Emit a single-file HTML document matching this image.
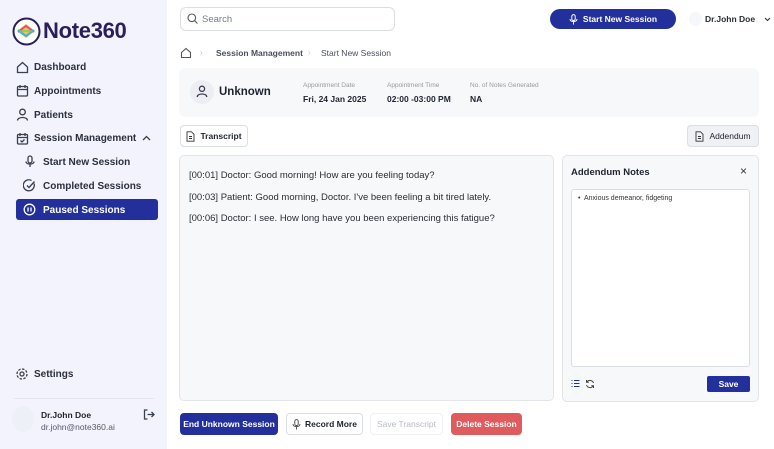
<!DOCTYPE html>
<html><head><meta charset="utf-8"><style>
*{box-sizing:border-box;margin:0;padding:0}
body{width:774px;height:449px;position:relative;background:#fff;font-family:"Liberation Sans",sans-serif;color:#1f2330;overflow:hidden}
.a{position:absolute}
.sb{left:0;top:0;width:167px;height:449px;background:#f2f3fc}
.nav{font-size:10px;font-weight:bold;color:#2b2f3e}
.ic{stroke:#3a3f4e;fill:none;stroke-width:1.3}
.btn{border-radius:4px;font-size:8.5px;font-weight:bold;display:flex;align-items:center;justify-content:center}
</style></head><body>
<div class="a sb"></div>
<svg class="a" style="left:12px;top:17px" width="29" height="29" viewBox="0 0 29 29"><circle cx="14.5" cy="14.5" r="13" fill="#fff" stroke="#2a1f5c" stroke-width="2"/><path d="M5 14 L14 7 L23 14 L14 21Z" fill="#f6c34a"/><path d="M6 15 L14 9 L22 15" stroke="#e94a7a" stroke-width="2" fill="none"/><path d="M6 13 L14 19 L22 13" stroke="#35b6e8" stroke-width="2" fill="none"/><path d="M8 14 H20" stroke="#7bcf5a" stroke-width="1.5"/></svg>
<div class="a" style="left:43px;top:18px;font-size:22px;font-weight:bold;color:#2a1f5c;letter-spacing:-0.3px">Note360</div>

<svg class="a" style="left:16px;top:61px" width="13" height="13"><path class="ic" d="M1.5 6 L6.5 1.5 L11.5 6 V11.5 H1.5Z"/></svg>
<div class="a nav" style="left:34px;top:62px">Dashboard</div>
<svg class="a" style="left:16px;top:84px" width="13" height="13"><rect class="ic" x="1.5" y="2.5" width="10" height="9.5" rx="1"/><path class="ic" d="M1.5 5.5H11.5M4 1V4M9 1V4"/></svg>
<div class="a nav" style="left:34px;top:86px">Appointments</div>
<svg class="a" style="left:16px;top:108px" width="13" height="13"><circle class="ic" cx="6.5" cy="4" r="2.8"/><path class="ic" d="M1.5 12.5C2 8.5 11 8.5 11.5 12.5"/></svg>
<div class="a nav" style="left:34px;top:110px">Patients</div>
<svg class="a" style="left:16px;top:132px" width="13" height="13"><rect class="ic" x="1.5" y="2.5" width="10" height="9.5" rx="1"/><path class="ic" d="M1.5 5.5H11.5M4 1V4M9 1V4M4.5 8.5L6 10L8.5 7.5"/></svg>
<div class="a nav" style="left:34px;top:133px">Session Management</div>
<svg class="a" style="left:142px;top:135px" width="9" height="6"><path class="ic" d="M1 5L4.5 1.5L8 5" stroke-width="1"/></svg>
<svg class="a" style="left:24px;top:155px" width="12" height="13"><rect class="ic" x="4" y="1" width="4" height="7" rx="2"/><path class="ic" d="M2 6.5C2 10 10 10 10 6.5M6 9.5V12"/></svg>
<div class="a nav" style="left:43px;top:157px">Start New Session</div>
<svg class="a" style="left:23px;top:179px" width="13" height="13"><path class="ic" d="M11 4.5A5.5 5.5 0 1 1 8.5 1.5"/><path class="ic" d="M4 6.5L6 8.5L11.5 2.5"/></svg>
<div class="a nav" style="left:43px;top:181px">Completed Sessions</div>
<div class="a" style="left:16px;top:199px;width:142px;height:21px;background:#23309c;border-radius:3px"></div>
<svg class="a" style="left:23px;top:203px" width="13" height="13"><circle cx="6.5" cy="6.5" r="5.3" stroke="#fff" fill="none" stroke-width="1.3"/><path d="M5 4.5V8.5M8 4.5V8.5" stroke="#fff" stroke-width="1.3"/></svg>
<div class="a nav" style="left:43px;top:205px;color:#fff">Paused Sessions</div>

<svg class="a" style="left:15px;top:367px" width="14" height="14"><circle class="ic" cx="7" cy="7" r="2"/><circle class="ic" cx="7" cy="7" r="5" stroke-dasharray="2.5 1.4"/></svg>
<div class="a nav" style="left:34px;top:369px">Settings</div>
<div class="a" style="left:14px;top:398px;width:140px;height:1px;background:#e3e5ef"></div>
<div class="a" style="left:12px;top:406px;width:22px;height:26px;border-radius:50%;background:#eef0f8"></div>
<div class="a" style="left:41px;top:410px;font-size:8.5px;font-weight:bold">Dr.John Doe</div>
<div class="a" style="left:41px;top:422px;font-size:8.5px;color:#555a68">dr.john@note360.ai</div>
<svg class="a" style="left:143px;top:409px" width="12" height="11"><path class="ic" d="M4.5 1H1.5V10H4.5M4.5 5.5H11M8.5 3L11 5.5L8.5 8" stroke-width="1.1"/></svg>

<div class="a" style="left:180px;top:7px;width:215px;height:24px;border:1px solid #dcdee5;border-radius:6px"></div>
<svg class="a" style="left:187px;top:13px" width="11" height="11"><circle cx="4.8" cy="4.8" r="3.8" fill="none" stroke="#555" stroke-width="1.1"/><path d="M7.6 7.6L10.5 10.5" stroke="#555" stroke-width="1.1"/></svg>
<div class="a" style="left:202px;top:14px;font-size:9.5px;color:#777b86">Search</div>
<div class="a btn" style="left:550px;top:9px;width:126px;height:20px;border-radius:11px;background:#23309c;color:#fff;font-size:8.5px"><svg width="9" height="11" style="margin-right:5px"><rect x="2.8" y="0.6" width="3.4" height="6" rx="1.7" stroke="#fff" fill="none"/><path d="M1 5C1 8.5 8 8.5 8 5M4.5 8V10.5" stroke="#fff" fill="none"/></svg>Start New Session</div>
<div class="a" style="left:689px;top:12px;width:13px;height:14px;border-radius:50%;background:#f6f7fa"></div>
<div class="a" style="left:705px;top:14px;font-size:8.5px;font-weight:bold;color:#2a2d36">Dr.John Doe</div>
<svg class="a" style="left:764px;top:17px" width="7" height="5"><path d="M1 1L3.5 3.5L6 1" stroke="#333" fill="none" stroke-width="1.1"/></svg>

<svg class="a" style="left:180px;top:47px" width="12" height="12"><path d="M1.5 5.5L6 1.5L10.5 5.5V10.5H1.5Z" fill="none" stroke="#555" stroke-width="1.1"/></svg>
<div class="a" style="left:200px;top:48px;font-size:8px;color:#bbb">›</div>
<div class="a" style="left:216px;top:48px;font-size:8.5px;font-weight:bold;color:#4a4f5c">Session Management</div>
<div class="a" style="left:308px;top:48px;font-size:8px;color:#ccc">›</div>
<div class="a" style="left:321px;top:48px;font-size:8.5px;color:#4a4f5c">Start New Session</div>

<div class="a" style="left:179px;top:68px;width:580px;height:49px;background:#f7f8fa;border-radius:6px"></div>
<div class="a" style="left:190px;top:80px;width:24px;height:24px;border-radius:50%;background:#eceef3"></div>
<svg class="a" style="left:196px;top:85px" width="12" height="13"><circle class="ic" cx="6" cy="3.8" r="2.6"/><path class="ic" d="M1.2 12C1.6 8 10.4 8 10.8 12"/></svg>
<div class="a" style="left:219px;top:86px;font-size:11.5px;font-weight:bold">Unknown</div>
<div class="a" style="left:303px;top:82px;font-size:6.5px;color:#999">Appointment Date</div>
<div class="a" style="left:303px;top:94px;font-size:8.5px;font-weight:bold">Fri, 24 Jan 2025</div>
<div class="a" style="left:387px;top:82px;font-size:6.5px;color:#999">Appointment Time</div>
<div class="a" style="left:387px;top:94px;font-size:8.5px;font-weight:bold">02:00 -03:00 PM</div>
<div class="a" style="left:470px;top:82px;font-size:6.5px;color:#999">No. of Notes Generated</div>
<div class="a" style="left:470px;top:94px;font-size:8.5px;font-weight:bold">NA</div>

<div class="a btn" style="left:180px;top:125px;width:68px;height:22px;border:1px solid #dcdee5;background:#fff;font-size:8.5px"><svg width="9" height="11" style="margin-right:5px"><path d="M1 0.8H5.5L8 3.3V10.2H1Z M3 5.5H6M3 7.5H6" fill="none" stroke="#333" stroke-width="0.9"/></svg>Transcript</div>
<div class="a btn" style="left:687px;top:125px;width:72px;height:22px;border:1px solid #dcdee5;background:#f0f1f4;font-size:8.5px;font-weight:normal"><svg width="9" height="11" style="margin-right:5px"><path d="M1 0.8H5.5L8 3.3V10.2H1Z M3 5.5H6M3 7.5H6" fill="none" stroke="#333" stroke-width="0.9"/></svg>Addendum</div>

<div class="a" style="left:179px;top:155px;width:375px;height:246px;background:#f7f8fa;border:1px solid #e2e4ea;border-radius:5px"></div>
<div class="a" style="left:189px;top:165px;font-size:9.5px;color:#2a2d36;line-height:21.5px">[00:01] Doctor: Good morning! How are you feeling today?<br>[00:03] Patient: Good morning, Doctor. I've been feeling a bit tired lately.<br>[00:06] Doctor: I see. How long have you been experiencing this fatigue?</div>

<div class="a" style="left:562px;top:155px;width:197px;height:247px;background:#f7f8fa;border:1px solid #e2e4ea;border-radius:5px"></div>
<div class="a" style="left:571px;top:167px;font-size:9.5px;font-weight:bold">Addendum Notes</div>
<div class="a" style="left:740px;top:164px;font-size:12px;color:#333">×</div>
<div class="a" style="left:571px;top:189px;width:179px;height:178px;background:#fff;border:1px solid #dcdee5;border-radius:3px"></div>
<div class="a" style="left:578px;top:195px;font-size:7px;color:#333">•&nbsp; Anxious demeanor, fidgeting</div>
<svg class="a" style="left:571px;top:379px" width="9" height="9"><path d="M3 1.5H8.5M3 4.5H8.5M3 7.5H8.5M0.5 1.5H1.5M0.5 4.5H1.5M0.5 7.5H1.5" stroke="#23309c" stroke-width="1"/></svg>
<svg class="a" style="left:585px;top:379px" width="10" height="10"><path d="M8.5 4A3.8 3.8 0 0 0 1.8 3M1.5 6A3.8 3.8 0 0 0 8.2 7M1.5 1V3.3H3.8M8.5 9V6.7H6.2" fill="none" stroke="#444" stroke-width="1"/></svg>
<div class="a btn" style="left:707px;top:376px;width:43px;height:16px;border-radius:2px;background:#23309c;color:#fff;font-size:8.5px">Save</div>

<div class="a btn" style="left:180px;top:413px;width:98px;height:22px;background:#23309c;color:#fff">End Unknown Session</div>
<div class="a btn" style="left:286px;top:413px;width:77px;height:22px;border:1px solid #dcdee5;background:#fff"><svg width="9" height="11" style="margin-right:4px"><rect x="2.8" y="0.6" width="3.4" height="6" rx="1.7" stroke="#444" fill="none" stroke-width="0.9"/><path d="M1 5C1 8.5 8 8.5 8 5M4.5 8V10.5" stroke="#444" fill="none" stroke-width="0.9"/></svg>Record More</div>
<div class="a btn" style="left:370px;top:413px;width:73px;height:22px;border:1px solid #eef0f3;background:#fff;color:#b8bbc4;font-weight:normal">Save Transcript</div>
<div class="a btn" style="left:451px;top:413px;width:71px;height:22px;background:#e05b5d;color:#fff">Delete Session</div>
</body></html>
